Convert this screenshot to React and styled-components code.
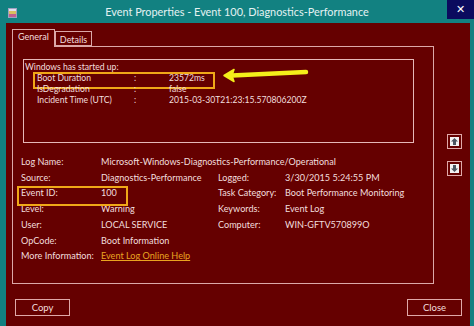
import React from 'react';
import styled, { createGlobalStyle } from 'styled-components';

const Global = createGlobalStyle`
  html, body { margin: 0; padding: 0; background: #128181; }
  body { font-family: Lato, "Noto Sans", sans-serif; }
  * { box-sizing: border-box; }
`;

const Window = styled.div`
  width: 474px;
  height: 326px;
  background: #128181;
  display: flex;
  flex-direction: column;
  overflow: hidden;
`;

const TitleBar = styled.div`
  height: 23px;
  flex-shrink: 0;
  display: grid;
  grid-template-columns: 1fr auto 1fr;
  align-items: start;
`;

const AppIcon = styled.div`
  margin: 8px 0 0 8px;
  width: 9px;
  height: 10px;
  background: linear-gradient(#e0e0f0 0 30%, #d8c060 30% 60%, #c06090 60%);
  border: 1px solid #a0a0c0;
`;

const Title = styled.div`
  font-size: 10.9px;
  line-height: 23px;
  color: #e4f2f2;
  white-space: nowrap;
`;

const CloseBtn = styled.div`
  justify-self: end;
  width: 27px;
  height: 19px;
  background: #0b0b5e;
  color: #ffffff;
  font-family: "DejaVu Sans", sans-serif;
  font-weight: bold;
  font-size: 11px;
  line-height: 19px;
  text-align: center;
`;

const Body = styled.div`
  flex: 1;
  margin: 0 4px 0 6px;
  background: #650000;
  padding: 6px 8px 0 6px;
  display: flex;
  flex-direction: column;
`;

const Tabs = styled.div`
  display: flex;
  align-items: flex-end;
  height: 17px;
  position: relative;
  z-index: 1;
`;

const Tab = styled.div`
  height: ${p => (p.$active ? '18px' : '15px')};
  margin-bottom: ${p => (p.$active ? '-1px' : '0')};
  padding: 0 ${p => (p.$active ? '5px' : '4px')};
  border: 1px solid #dca8a8;
  border-bottom: ${p => (p.$active ? 'none' : '1px solid #dca8a8')};
  background: #650000;
  color: #f2dede;
  font-size: 9px;
  line-height: ${p => (p.$active ? '14px' : '15px')};
`;

const Content = styled.div`
  display: flex;
`;

const Panel = styled.div`
  width: 422px;
  height: 238px;
  border: 1px solid #dca8a8;
  padding: 12px 19px 0 8px;
  display: flex;
  flex-direction: column;
`;

const GroupBox = styled.div`
  position: relative;
  height: 84px;
  margin-left: 2px;
  border: 1px solid #e6b8b8;
  padding: 1px 0 0 1px;
  color: #f2dede;
  font-size: 8.6px;
`;

const GroupTitle = styled.div`
  line-height: 12px;
`;

const KvRow = styled.div`
  position: relative;
  display: grid;
  grid-template-columns: 97px 35px 1fr;
  padding-left: 12px;
  line-height: 11px;
  ${p =>
    p.$marked &&
    `
    &::after {
      content: '';
      position: absolute;
      left: 8px;
      top: -1px;
      width: 178px;
      height: 13px;
      border: 2px solid #f0a818;
    }
  `}
`;

const Arrow = styled.svg`
  position: absolute;
  left: 198px;
  top: 6px;
`;

const Details = styled.div`
  margin-top: 11px;
  color: #f2dede;
  font-size: 9.1px;
`;

const DRow = styled.div`
  display: grid;
  grid-template-columns: 80px 117px 67px 1fr;
  line-height: 15.7px;
  white-space: nowrap;
`;

const Cell = styled.span`
  grid-column: ${p => p.$span || 'auto'};
`;

const MarkedPair = styled.div`
  position: relative;
  grid-column: 1 / 3;
  display: grid;
  grid-template-columns: 80px 117px;
  &::after {
    content: '';
    position: absolute;
    left: -4px;
    top: 1px;
    width: 107px;
    height: 16px;
    border: 2px solid #f0a818;
  }
`;

const Link = styled.span`
  color: #e9a420;
  text-decoration: underline;
`;

const Side = styled.div`
  margin-left: 13px;
  padding-top: 88px;
  display: flex;
  flex-direction: column;
  gap: 12px;
`;

const NavBtn = styled.div`
  width: 15px;
  height: 15px;
  border: 1px solid #e0a8a8;
  padding: 2px;
  background: #650000;
`;

const NavFace = styled.div`
  width: 9px;
  height: 9px;
  background: #f2f2f2;
  display: flex;
  align-items: center;
  justify-content: center;
`;

const ButtonRow = styled.div`
  margin-top: 15px;
  padding-left: 3px;
  display: flex;
  justify-content: space-between;
`;

const Button = styled.div`
  width: 55px;
  height: 17px;
  border: 1px solid #e0a8a8;
  color: #f2dede;
  font-size: 9.5px;
  line-height: 15px;
  text-align: center;
`;

const UpIcon = () => (
  <svg width="7" height="7" viewBox="0 0 7 7">
    <path d="M3.5 0 L7 3.5 L5 3.5 L5 7 L2 7 L2 3.5 L0 3.5 Z" fill="#4c5560" />
  </svg>
);

const DownIcon = () => (
  <svg width="7" height="7" viewBox="0 0 7 7">
    <path d="M3.5 7 L7 3.5 L5 3.5 L5 0 L2 0 L2 3.5 L0 3.5 Z" fill="#4c5560" />
  </svg>
);

export default function App() {
  return (
    <>
      <Global />
      <Window>
        <TitleBar>
          <AppIcon />
          <Title>Event Properties - Event 100, Diagnostics-Performance</Title>
          <CloseBtn>✕</CloseBtn>
        </TitleBar>
        <Body>
          <Tabs>
            <Tab $active>General</Tab>
            <Tab>Details</Tab>
          </Tabs>
          <Content>
            <Panel>
              <GroupBox>
                <GroupTitle>Windows has started up:</GroupTitle>
                <KvRow $marked>
                  <span>Boot Duration</span>
                  <span>:</span>
                  <span>23572ms</span>
                </KvRow>
                <KvRow>
                  <span>IsDegradation</span>
                  <span>:</span>
                  <span>false</span>
                </KvRow>
                <KvRow>
                  <span>Incident Time (UTC)</span>
                  <span>:</span>
                  <span>2015-03-30T21:23:15.570806200Z</span>
                </KvRow>
                <Arrow width="88" height="18" viewBox="0 0 88 18">
                  <path d="M10 9.5 L84 6" stroke="#f4ee1a" strokeWidth="4.5" strokeLinecap="round" />
                  <path d="M2 9.5 L12 3.5 L10 9.5 L12 15.5 Z" fill="#f4ee1a" stroke="#f4ee1a" strokeWidth="1.5" strokeLinejoin="round" />
                </Arrow>
              </GroupBox>
              <Details>
                <DRow>
                  <Cell>Log Name:</Cell>
                  <Cell $span="2 / 5">Microsoft-Windows-Diagnostics-Performance/Operational</Cell>
                </DRow>
                <DRow>
                  <Cell>Source:</Cell>
                  <Cell>Diagnostics-Performance</Cell>
                  <Cell>Logged:</Cell>
                  <Cell>3/30/2015 5:24:55 PM</Cell>
                </DRow>
                <DRow>
                  <MarkedPair>
                    <Cell>Event ID:</Cell>
                    <Cell>100</Cell>
                  </MarkedPair>
                  <Cell>Task Category:</Cell>
                  <Cell>Boot Performance Monitoring</Cell>
                </DRow>
                <DRow>
                  <Cell>Level:</Cell>
                  <Cell>Warning</Cell>
                  <Cell>Keywords:</Cell>
                  <Cell>Event Log</Cell>
                </DRow>
                <DRow>
                  <Cell>User:</Cell>
                  <Cell>LOCAL SERVICE</Cell>
                  <Cell>Computer:</Cell>
                  <Cell>WIN-GFTV570899O</Cell>
                </DRow>
                <DRow>
                  <Cell>OpCode:</Cell>
                  <Cell>Boot Information</Cell>
                </DRow>
                <DRow>
                  <Cell>More Information:</Cell>
                  <Cell $span="2 / 5"><Link>Event Log Online Help</Link></Cell>
                </DRow>
              </Details>
            </Panel>
            <Side>
              <NavBtn><NavFace><UpIcon /></NavFace></NavBtn>
              <NavBtn><NavFace><DownIcon /></NavFace></NavBtn>
            </Side>
          </Content>
          <ButtonRow>
            <Button>Copy</Button>
            <Button>Close</Button>
          </ButtonRow>
        </Body>
      </Window>
    </>
  );
}
